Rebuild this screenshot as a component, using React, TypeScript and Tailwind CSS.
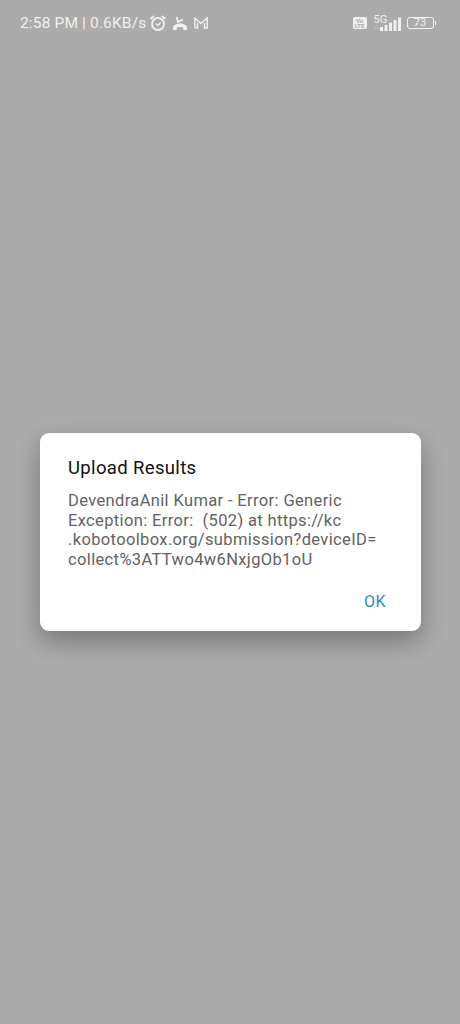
export default function App() {
  return (
    <div className="h-[1024px] w-[460px] overflow-hidden bg-[#ababab] font-['Roboto',sans-serif]">
      <div className="flex h-[46px] items-center justify-between pl-[20px] pr-[24px] text-[#f0f0f0]">
        <div className="flex items-center">
          <span className="text-[15.5px] leading-[20px] tracking-[0.15px] whitespace-nowrap">2:58 PM | 0.6KB/s</span>
          <svg className="ml-[3px]" width="18" height="18" viewBox="0 0 18 18" fill="none" stroke="#f0f0f0" strokeWidth="1.8">
            <circle cx="9" cy="10" r="6" />
            <path d="M6.5 9.5 L9 11.5 L11.5 8.5" strokeWidth="1.5" />
            <path d="M1.5 5 L5 2 M16.5 5 L13 2" />
          </svg>
          <svg className="ml-[6px]" width="14" height="15" viewBox="0 0 14 15" fill="#f0f0f0">
            <path d="M0 12 C0 9 3.5 7.5 7 7.5 C10.5 7.5 14 9 14 12 L14 14 L10.5 14 L10 11.5 C8.8 10.8 5.2 10.8 4 11.5 L3.5 14 L0 14 Z" />
            <path d="M3.5 1 L5 6 L10 3.5" fill="none" stroke="#f0f0f0" strokeWidth="1.6" />
          </svg>
          <svg className="ml-[7px]" width="14" height="12" viewBox="0 0 14 12" fill="none" stroke="#f0f0f0" strokeWidth="1.4">
            <path d="M0.8 11 L0.8 1 L7 6.5 L13.2 1 L13.2 11 L10.5 11 L10.5 6 M0.8 11 L3.5 11 L3.5 6" />
          </svg>
        </div>
        <div className="flex items-center">
          <div className="flex h-[12px] w-[14px] flex-col items-center justify-center rounded-[2px] bg-[#f0f0f0] text-[6px] leading-[5.5px] font-bold text-[#ababab]">
            <span>Vo</span>
            <span>LTE</span>
          </div>
          <div className="ml-[7px] flex w-[6px] flex-col">
            <span className="text-[11px] leading-[10px] whitespace-nowrap">5G</span>
            <span className="text-[5px] leading-[6px] whitespace-nowrap opacity-60">↑↓</span>
          </div>
          <svg className="mt-[2px]" width="21" height="14" viewBox="0 0 21 14" fill="#f0f0f0">
            <rect x="0" y="10" width="3" height="4" />
            <rect x="4.5" y="8" width="3" height="6" />
            <rect x="9" y="5.5" width="3" height="8.5" />
            <rect x="13.5" y="3" width="3" height="11" />
            <rect x="18" y="0.5" width="3" height="13.5" />
          </svg>
          <div className="ml-[6px] flex h-[12px] w-[27px] items-center justify-center rounded-[3px] border border-[#f0f0f0] text-[11px] leading-[10px]">
            73
          </div>
          <div className="ml-[1px] h-[4px] w-[1.5px] bg-[#f0f0f0]" />
        </div>
      </div>
      <div className="mx-[40px] mt-[387px] h-[198px] w-[381px] rounded-[9px] bg-white px-[28px] pt-[23px] shadow-[0_10px_24px_rgba(0,0,0,0.3)]">
        <div className="text-[18.5px] leading-[24px] tracking-[0.35px] text-[#111111]">Upload Results</div>
        <div className="mt-[11px] text-[16.5px] leading-[19.7px] tracking-[0.36px] whitespace-nowrap text-[#636363]">
          <div>DevendraAnil Kumar - Error: Generic</div>
          <div className="whitespace-pre">Exception: Error:  (502) at https://kc</div>
          <div>.kobotoolbox.org/submission?deviceID=</div>
          <div>collect%3ATTwo4w6NxjgOb1oU</div>
        </div>
        <div className="mt-[22px] flex justify-end pr-[7px] text-[16px] leading-[20px] tracking-[0.5px] text-[#2a8bb5]">
          OK
        </div>
      </div>
    </div>
  );
}
